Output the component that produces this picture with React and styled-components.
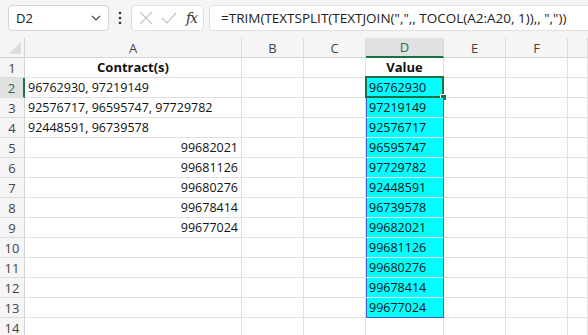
import React from "react";
import styled, { createGlobalStyle } from "styled-components";

const GlobalStyle = createGlobalStyle`
  html, body {
    margin: 0;
    padding: 0;
    background: #fff;
    overflow: hidden;
  }
  body {
    font-family: "Open Sans", "Noto Sans", sans-serif;
  }
`;

const Page = styled.div`
  width: 588px;
  height: 335px;
  overflow: hidden;
  display: flex;
  flex-direction: column;
`;

const Toolbar = styled.div`
  flex-shrink: 0;
  height: 38px;
  background: #f5f5f5;
  display: flex;
  align-items: flex-start;
  padding: 5px 0 0 8px;
  box-sizing: border-box;
`;

const NameBox = styled.div`
  width: 101px;
  height: 26px;
  box-sizing: border-box;
  background: #fff;
  border: 1px solid #d4d4d4;
  border-radius: 4px;
  display: flex;
  align-items: center;
  justify-content: space-between;
  padding: 0 7px 0 7px;
  font-size: 13px;
  color: #222;
`;

const Dots = styled.div`
  width: 22px;
  height: 26px;
  display: flex;
  align-items: center;
  justify-content: center;
`;

const FxBox = styled.div`
  width: 73px;
  height: 26px;
  box-sizing: border-box;
  background: #fff;
  border: 1px solid #e0e0e0;
  border-radius: 4px;
  display: flex;
  align-items: center;
  justify-content: space-between;
  padding: 0 6px 0 7px;
`;

const Fx = styled.span`
  font-family: "DejaVu Serif", "Liberation Serif", serif;
  font-style: italic;
  font-size: 14px;
  color: #333;
  letter-spacing: -1px;
`;

const FormulaBox = styled.div`
  flex: 1;
  margin-left: 5px;
  height: 26px;
  box-sizing: border-box;
  background: #fff;
  border: 1px solid #e0e0e0;
  border-right: none;
  border-radius: 4px 0 0 4px;
  display: flex;
  align-items: center;
  padding-left: 11px;
  font-size: 13.5px;
  color: #222;
  white-space: nowrap;
  overflow: hidden;
`;

const Grid = styled.div`
  flex-shrink: 0;
  display: grid;
  grid-template-columns: 25px 217px 62px 62px 78px 62px 62px 20px;
  grid-auto-rows: 20px;
  font-family: "Open Sans", "Noto Sans", sans-serif;
  font-size: 12.5px;
  color: #111;
`;

const ColHead = styled.div`
  box-sizing: border-box;
  background: ${(p) => (p.active ? "#e1e1e1" : "#f5f5f5")};
  border-right: 1px solid #dcdcdc;
  border-bottom: ${(p) => (p.active ? "2px solid #1e7145" : "1px solid #d4d4d4")};
  display: flex;
  align-items: center;
  justify-content: center;
  font-size: 13px;
  color: ${(p) => (p.active ? "#1e7145" : "#444")};
`;

const Corner = styled.div`
  box-sizing: border-box;
  background: #f5f5f5;
  border-right: 1px solid #d4d4d4;
  border-bottom: 1px solid #d4d4d4;
  display: flex;
  align-items: flex-end;
  justify-content: flex-end;
  padding: 0 3px 3px 0;
`;

const RowHead = styled.div`
  box-sizing: border-box;
  background: ${(p) => (p.active ? "#e1e1e1" : "#f5f5f5")};
  border-right: ${(p) => (p.active ? "2px solid #1e7145" : "1px solid #d4d4d4")};
  border-bottom: 1px solid #dcdcdc;
  display: flex;
  align-items: center;
  justify-content: center;
  font-size: 13px;
  color: ${(p) => (p.active ? "#1e7145" : "#444")};
`;

const Cell = styled.div`
  position: relative;
  box-sizing: border-box;
  background: ${(p) => (p.spill ? "#00ffff" : "#fff")};
  border-right: 1px solid ${(p) => (p.spill ? "#3a5fcd" : "#e1e1e1")};
  border-bottom: 1px solid ${(p) => (p.last ? "#3a5fcd" : "#e1e1e1")};
  box-shadow: ${(p) => (p.spill ? "inset 1px 0 0 #3a5fcd" : "none")};
  display: flex;
  align-items: center;
  justify-content: ${(p) =>
    p.align === "right" ? "flex-end" : p.align === "center" ? "center" : "flex-start"};
  padding: 0 3px 1px 3px;
  font-weight: ${(p) => (p.bold ? 700 : 400)};
  font-size: ${(p) => (p.bold ? "13px" : "inherit")};
  white-space: nowrap;
  overflow: visible;
  z-index: ${(p) => (p.spill ? 1 : 0)};
`;

const Active = styled.div`
  position: absolute;
  left: -1px;
  top: -2px;
  right: -1px;
  bottom: -1px;
  border: 2px solid #1e7145;
  pointer-events: none;
  &::after {
    content: "";
    position: absolute;
    right: -5px;
    bottom: -5px;
    width: 5px;
    height: 5px;
    background: #1e7145;
    border: 1px solid #fff;
  }
`;

const colA = [
  { t: "Contract(s)", align: "center", bold: true },
  { t: "96762930, 97219149" },
  { t: "92576717, 96595747, 97729782" },
  { t: "92448591, 96739578" },
  { t: "99682021", align: "right" },
  { t: "99681126", align: "right" },
  { t: "99680276", align: "right" },
  { t: "99678414", align: "right" },
  { t: "99677024", align: "right" },
];

const colD = [
  "96762930",
  "97219149",
  "92576717",
  "96595747",
  "97729782",
  "92448591",
  "96739578",
  "99682021",
  "99681126",
  "99680276",
  "99678414",
  "99677024",
];

const Chevron = () => (
  <svg width="10" height="6" viewBox="0 0 10 6">
    <path d="M1 1 L5 5 L9 1" fill="none" stroke="#444" strokeWidth="1.2" />
  </svg>
);

export default function App() {
  const rows = Array.from({ length: 14 }, (_, i) => i + 1);
  return (
    <Page>
      <GlobalStyle />
      <Toolbar>
        <NameBox>
          <span>D2</span>
          <Chevron />
        </NameBox>
        <Dots>
          <svg width="4" height="14" viewBox="0 0 4 14">
            <circle cx="2" cy="2" r="1.3" fill="#333" />
            <circle cx="2" cy="7" r="1.3" fill="#333" />
            <circle cx="2" cy="12" r="1.3" fill="#333" />
          </svg>
        </Dots>
        <FxBox>
          <svg width="14" height="14" viewBox="0 0 14 14">
            <path d="M1 1 L13 13 M13 1 L1 13" stroke="#c4c4c4" strokeWidth="1.2" />
          </svg>
          <svg width="16" height="14" viewBox="0 0 16 14">
            <path d="M1 7 L6 12 L15 2" fill="none" stroke="#c4c4c4" strokeWidth="1.2" />
          </svg>
          <Fx>fx</Fx>
        </FxBox>
        <FormulaBox>=TRIM(TEXTSPLIT(TEXTJOIN(",",, TOCOL(A2:A20, 1)),, ","))</FormulaBox>
      </Toolbar>
      <Grid>
        <Corner>
          <svg width="12" height="12" viewBox="0 0 12 12">
            <path d="M12 0 L12 12 L0 12 Z" fill="#dcdcdc" />
          </svg>
        </Corner>
        {["A", "B", "C", "D", "E", "F", ""].map((c, i) => (
          <ColHead key={i} active={c === "D"}>
            {c}
          </ColHead>
        ))}
        {rows.map((r) => {
          const a = colA[r - 1];
          const d = r >= 2 && r <= 13 ? colD[r - 2] : null;
          return (
            <React.Fragment key={r}>
              <RowHead active={r === 2}>{r}</RowHead>
              <Cell align={a && a.align} bold={a && a.bold}>
                {a ? a.t : ""}
              </Cell>
              <Cell />
              <Cell />
              {r === 1 ? (
                <Cell align="center" bold>
                  Value
                </Cell>
              ) : d ? (
                <Cell spill last={r === 13}>
                  {d}
                  {r === 2 && <Active />}
                </Cell>
              ) : (
                <Cell />
              )}
              <Cell />
              <Cell />
              <Cell />
            </React.Fragment>
          );
        })}
      </Grid>
    </Page>
  );
}
